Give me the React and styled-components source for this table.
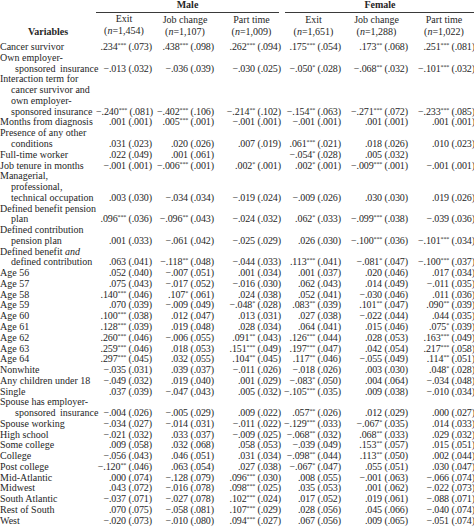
import React from 'react';
import styled, { createGlobalStyle } from 'styled-components';

const GlobalStyle = createGlobalStyle`
  html, body {
    margin: 0;
    padding: 0;
    background: #fff;
    overflow: hidden;
  }
`;

const Table = styled.div`
  display: grid;
  grid-template-columns: 96px 56px 62px 67px 60px 67px 67px;
  width: 475px;
  margin-top: -1.5px;
  font-family: "Liberation Serif", "Times New Roman", serif;
  font-size: 10px;
  color: #262626;
`;

const GroupHead = styled.div`
  grid-column: ${props => props.$col} / span 3;
  margin: ${props => props.$female ? '0 0 0 4px' : '0 2px 0 0'};
  padding-bottom: 2px;
  border-bottom: 1px solid #3a3a3a;
  text-align: center;
  font-weight: bold;
  line-height: 11px;
`;

const VarHead = styled.div`
  grid-column: 1;
  align-self: end;
  text-align: center;
  font-weight: bold;
  line-height: 12px;
  padding-bottom: 4.6px;
`;

const ColHead = styled.div`
  text-align: center;
  line-height: 12px;
  padding: 1px 0 4.6px ${props => props.$shift}px;
  white-space: nowrap;
`;

const Label = styled.div`
  grid-column: 1;
  line-height: 10.77px;
  white-space: nowrap;
`;

const LabelLine = styled.div`
  padding-left: ${props => props.$indent}px;
  word-spacing: ${props => props.$wide ? '2px' : 'normal'};
`;

const Cell = styled.div`
  align-self: end;
  text-align: right;
  line-height: 10.77px;
  white-space: nowrap;
  letter-spacing: -0.1px;
`;

const Stars = styled.sup`
  font-size: 6px;
  line-height: 0;
  vertical-align: 3px;
  letter-spacing: -0.2px;
`;

const groups = [
  { name: 'Male', cols: [['Exit', '1,454', -1], ['Job change', '1,107', 4], ['Part time', '1,009', 8]] },
  { name: 'Female', cols: [['Exit', '1,651', 5], ['Job change', '1,288', 4], ['Part time', '1,022', 5]] },
];

const r = (label, values, wide) => ({ label, values, wide });

const rows = [
  r(['Cancer survivor'], ['.234*** (.073)', '.438*** (.098)', '.262*** (.094)', '.175*** (.054)', '.173** (.068)', '.251*** (.081)']),
  r(['Own employer-', 'sponsored insurance'], ['−.013 (.032)', '−.036 (.039)', '−.030 (.025)', '−.050* (.028)', '−.068** (.032)', '−.101*** (.032)'], true),
  r(['Interaction term for', 'cancer survivor and', 'own employer-', 'sponsored insurance'], ['−.240*** (.081)', '−.402*** (.106)', '−.214** (.102)', '−.154** (.063)', '−.271*** (.072)', '−.233*** (.085)']),
  r(['Months from diagnosis'], ['.001 (.001)', '.005*** (.001)', '−.001 (.001)', '−.001 (.001)', '.001 (.001)', '.001 (.001)']),
  r(['Presence of any other', 'conditions'], ['.031 (.023)', '.020 (.026)', '.007 (.019)', '.061*** (.021)', '.018 (.026)', '.010 (.023)']),
  r(['Full-time worker'], ['.022 (.049)', '.001 (.061)', '', '−.054* (.028)', '.005 (.032)', '']),
  r(['Job tenure in months'], ['−.001 (.001)', '−.006*** (.001)', '.002* (.001)', '.002* (.001)', '−.009*** (.001)', '−.001 (.001)']),
  r(['Managerial,', 'professional,', 'technical occupation'], ['.003 (.030)', '−.034 (.034)', '−.019 (.024)', '−.009 (.026)', '.030 (.030)', '.019 (.026)']),
  r(['Defined benefit pension', 'plan'], ['.096*** (.036)', '−.096** (.043)', '−.024 (.032)', '.062* (.033)', '−.099*** (.038)', '−.039 (.036)']),
  r(['Defined contribution', 'pension plan'], ['.001 (.033)', '−.061 (.042)', '−.025 (.029)', '.026 (.030)', '−.100*** (.036)', '−.101*** (.034)']),
  r([<>Defined benefit <i>and</i></>, 'defined contribution'], ['.063 (.041)', '−.118** (.048)', '−.044 (.033)', '.113*** (.041)', '−.081* (.047)', '−.100*** (.037)']),
  r(['Age 56'], ['.052 (.040)', '−.007 (.051)', '.001 (.034)', '.001 (.037)', '.020 (.046)', '.017 (.034)']),
  r(['Age 57'], ['.075 (.043)', '−.017 (.052)', '−.016 (.030)', '.062 (.043)', '.014 (.049)', '−.011 (.035)']),
  r(['Age 58'], ['.140*** (.046)', '.107* (.061)', '.024 (.038)', '.052 (.041)', '−.030 (.046)', '.011 (.036)']),
  r(['Age 59'], ['.070 (.039)', '−.009 (.049)', '−.048* (.028)', '.083** (.039)', '.101** (.047)', '.090** (.039)']),
  r(['Age 60'], ['.100*** (.038)', '.012 (.047)', '.013 (.031)', '.027 (.038)', '−.022 (.044)', '.044 (.035)']),
  r(['Age 61'], ['.128*** (.039)', '.019 (.048)', '.028 (.034)', '.064 (.041)', '.015 (.046)', '.075* (.039)']),
  r(['Age 62'], ['.260*** (.046)', '−.006 (.055)', '.091** (.043)', '.126*** (.044)', '.028 (.053)', '.163*** (.049)']),
  r(['Age 63'], ['.259*** (.046)', '.018 (.053)', '.151*** (.049)', '.197*** (.047)', '.042 (.054)', '.217*** (.058)']),
  r(['Age 64'], ['.297*** (.045)', '.032 (.055)', '.104** (.045)', '.117** (.046)', '−.055 (.049)', '.114** (.051)']),
  r(['Nonwhite'], ['−.035 (.031)', '.039 (.037)', '−.011 (.026)', '−.018 (.026)', '.003 (.030)', '.048* (.028)']),
  r(['Any children under 18'], ['−.049 (.032)', '.019 (.040)', '.001 (.029)', '−.083* (.050)', '.004 (.064)', '−.034 (.048)']),
  r(['Single'], ['.037 (.039)', '−.047 (.043)', '.005 (.032)', '−.105*** (.035)', '.009 (.038)', '−.010 (.034)']),
  r(['Spouse has employer-', 'sponsored insurance'], ['−.004 (.026)', '−.005 (.029)', '.009 (.022)', '.057** (.026)', '.012 (.029)', '.000 (.027)'], true),
  r(['Spouse working'], ['−.034 (.027)', '−.014 (.031)', '−.011 (.022)', '−.129*** (.033)', '−.067* (.035)', '.014 (.033)']),
  r(['High school'], ['−.021 (.032)', '.033 (.037)', '−.009 (.025)', '−.068** (.032)', '.068** (.033)', '.029 (.032)']),
  r(['Some college'], ['.009 (.058)', '.032 (.068)', '.058 (.053)', '−.039 (.049)', '.153** (.057)', '.015 (.051)']),
  r(['College'], ['−.056 (.043)', '.046 (.051)', '.031 (.034)', '−.098** (.044)', '.113** (.050)', '.002 (.044)']),
  r(['Post college'], ['−.120** (.046)', '.063 (.054)', '.027 (.038)', '−.067* (.047)', '.055 (.051)', '.030 (.047)']),
  r(['Mid-Atlantic'], ['.000 (.074)', '−.128 (.079)', '.096*** (.030)', '.008 (.055)', '−.001 (.063)', '−.066 (.074)']),
  r(['Midwest'], ['.043 (.072)', '−.016 (.078)', '.098*** (.025)', '.035 (.053)', '.001 (.062)', '−.022 (.073)']),
  r(['South Atlantic'], ['−.037 (.071)', '−.027 (.078)', '.102*** (.024)', '.017 (.052)', '.019 (.061)', '−.088 (.071)']),
  r(['Rest of South'], ['.070 (.075)', '−.058 (.081)', '.107*** (.029)', '.028 (.056)', '.045 (.066)', '−.040 (.074)']),
  r(['West'], ['−.020 (.073)', '−.010 (.080)', '.094*** (.027)', '.067 (.056)', '.009 (.065)', '−.051 (.074)']),
];

// ".234*** (.073)" -> coefficient, stars, standard error
const Value = ({ text }) => {
  const m = text.match(/^(\S*?)(\**) \((.+)\)$/);
  if (!m) return <Cell />;
  return (
    <Cell>
      {m[1]}{m[2] && <Stars>{m[2]}</Stars>} ({m[3]})
    </Cell>
  );
};

export default function App() {
  return (
    <>
      <GlobalStyle />
      <Table>
        <GroupHead $col={2}>Male</GroupHead>
        <GroupHead $col={5} $female>Female</GroupHead>

        <VarHead>Variables</VarHead>
        {groups.flatMap(g => g.cols.map(([title, n, shift]) => (
          <ColHead key={g.name + title} $shift={shift}>
            {title}
            <br />
            (<i>n</i>={n})
          </ColHead>
        )))}

        {rows.map((row, i) => (
          <React.Fragment key={i}>
            <Label>
              {row.label.map((line, j) => (
                <LabelLine key={j} $indent={j === 0 ? 0 : row.wide ? 15 : 11} $wide={row.wide && j > 0}>
                  {line}
                </LabelLine>
              ))}
            </Label>
            {row.values.map((v, j) => <Value key={j} text={v} />)}
          </React.Fragment>
        ))}
      </Table>
    </>
  );
}
